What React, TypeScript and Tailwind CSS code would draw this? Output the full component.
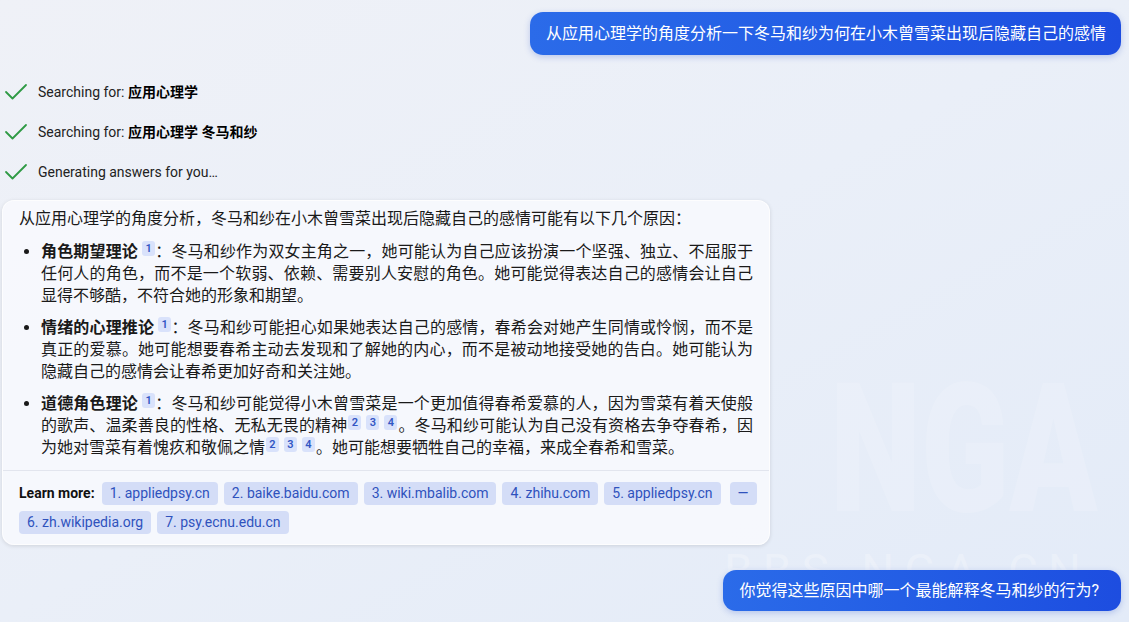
import React from 'react';

const font = "font-['Roboto','Noto_Sans_CJK_SC',sans-serif]";

const Check = () => (
    <svg width="24" height="18" viewBox="0 0 24 18" className="shrink-0">
        <path d="M2 9 L8.5 15.5 L22 2" fill="none" stroke="#2f9a45" strokeWidth="1.8" strokeLinecap="round" strokeLinejoin="round" />
    </svg>
);

const Ref = ({ n }: { n: number }) => (
    <span className="inline-block h-[15px] w-[13px] rounded-[3px] bg-[#d9e2fb] text-center align-[5px] text-[11px] font-semibold leading-[15px] text-[#3256c4]">
        {n}
    </span>
);

const Refs = () => (
    <span className="mx-[1px] inline-flex gap-[5px] align-[5px]">
        <span className="h-[15px] w-[13px] rounded-[3px] bg-[#d9e2fb] text-center text-[11px] font-semibold leading-[15px] text-[#3256c4]">2</span>
        <span className="h-[15px] w-[13px] rounded-[3px] bg-[#d9e2fb] text-center text-[11px] font-semibold leading-[15px] text-[#3256c4]">3</span>
        <span className="h-[15px] w-[13px] rounded-[3px] bg-[#d9e2fb] text-center text-[11px] font-semibold leading-[15px] text-[#3256c4]">4</span>
    </span>
);

const Pill = ({ children }: { children: React.ReactNode }) => (
    <span className="flex h-[23px] items-center rounded-[4px] bg-[#d4ddf7] px-[8px] text-[14px] text-[#2f52bd]">
        {children}
    </span>
);

const steps = [
    { label: 'Searching for: ', bold: '应用心理学' },
    { label: 'Searching for: ', bold: '应用心理学 冬马和纱' },
    { label: 'Generating answers for you…', bold: '' },
];

export default function App() {
    return (
        <div className={`relative h-[622px] w-[1129px] overflow-hidden bg-gradient-to-br from-[#eff1f7] via-[#eaeff8] to-[#e3ebf8] ${font}`}>
            {/* watermark */}
            <div className="pointer-events-none absolute left-[830px] top-[360px] origin-left scale-x-[0.72] select-none text-[180px] font-black leading-none text-white/15">
                NGA
            </div>
            <div className="pointer-events-none absolute left-[724px] top-[548px] select-none text-[46px] leading-none tracking-[0.22em] text-white/25">
                BBS.NGA.CN
            </div>

            <div className="relative flex flex-col">
                <div className="mr-[8px] mt-[12px] flex justify-end">
                    <div className="flex h-[43px] items-center rounded-[13px] bg-gradient-to-r from-[#2b6be9] to-[#1d4de0] pl-[16px] pr-[15px] text-[16px] text-white shadow-[0_2px_6px_rgba(40,80,200,0.25)]">
                        从应用心理学的角度分析一下冬马和纱为何在小木曾雪菜出现后隐藏自己的感情
                    </div>
                </div>

                <div className="mt-[27px] flex flex-col gap-[20px] pl-[4px]">
                    {steps.map((s) => (
                        <div key={s.label + s.bold} className="flex h-[20px] items-center gap-[10px] text-[14px] text-[#222]">
                            <Check />
                            <span>
                                {s.label}
                                {s.bold && <b className="font-bold text-black">{s.bold}</b>}
                            </span>
                        </div>
                    ))}
                </div>

                <div className="ml-[2px] mt-[18px] w-[768px] rounded-[12px] border border-white/70 bg-[#f7f8fd]/90 shadow-[0_1px_4px_rgba(0,0,0,0.12)]">
                    <div className="pb-[11px] pl-[16px] pr-[16px] pt-[7px] text-[16px] leading-[22px] text-[#1a1a1a]">
                        <p>从应用心理学的角度分析，冬马和纱在小木曾雪菜出现后隐藏自己的感情可能有以下几个原因：</p>
                        <ul className="mt-[11px] flex list-disc flex-col gap-[10px] pl-[22px] text-justify">
                            <li>
                                <b className="font-bold">角色期望理论</b> <Ref n={1} />：冬马和纱作为双女主角之一，她可能认为自己应该扮演一个坚强、独立、不屈服于任何人的角色，而不是一个软弱、依赖、需要别人安慰的角色。她可能觉得表达自己的感情会让自己显得不够酷，不符合她的形象和期望。
                            </li>
                            <li>
                                <b className="font-bold">情绪的心理推论</b> <Ref n={1} />：冬马和纱可能担心如果她表达自己的感情，春希会对她产生同情或怜悯，而不是真正的爱慕。她可能想要春希主动去发现和了解她的内心，而不是被动地接受她的告白。她可能认为隐藏自己的感情会让春希更加好奇和关注她。
                            </li>
                            <li>
                                <b className="font-bold">道德角色理论</b> <Ref n={1} />：冬马和纱可能觉得小木曾雪菜是一个更加值得春希爱慕的人，因为雪菜有着天使般的歌声、温柔善良的性格、无私无畏的精神
                                <Refs />。冬马和纱可能认为自己没有资格去争夺春希，因为她对雪菜有着愧疚和敬佩之情
                                <Refs />。她可能想要牺牲自己的幸福，来成全春希和雪菜。
                            </li>
                        </ul>
                    </div>
                    <div className="flex flex-wrap items-center gap-x-[6px] gap-y-[6px] border-t border-[#e2e5ee] pb-[10px] pl-[16px] pr-[6px] pt-[11px]">
                        <span className="mr-[1px] text-[14px] font-bold text-[#111]">Learn more:</span>
                        <Pill>1. appliedpsy.cn</Pill>
                        <Pill>2. baike.baidu.com</Pill>
                        <Pill>3. wiki.mbalib.com</Pill>
                        <Pill>4. zhihu.com</Pill>
                        <Pill>5. appliedpsy.cn</Pill>
                        <span className="ml-[3px] flex h-[23px] w-[27px] items-center justify-center rounded-[4px] bg-[#d4ddf7] text-[14px] text-[#2f52bd]">—</span>
                        <Pill>6. zh.wikipedia.org</Pill>
                        <Pill>7. psy.ecnu.edu.cn</Pill>
                    </div>
                </div>

                <div className="mr-[8px] mt-[25px] flex justify-end">
                    <div className="flex h-[41px] items-center rounded-[13px] bg-gradient-to-r from-[#2b6be9] to-[#1d4de0] pl-[16px] pr-[22px] text-[16px] text-white shadow-[0_2px_6px_rgba(40,80,200,0.25)]">
                        你觉得这些原因中哪一个最能解释冬马和纱的行为?
                    </div>
                </div>
            </div>
        </div>
    );
}
